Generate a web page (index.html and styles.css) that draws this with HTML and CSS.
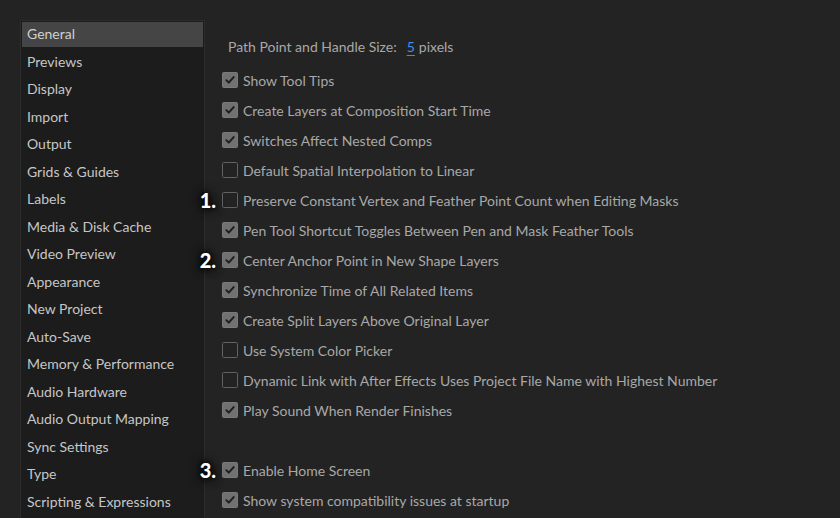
FILE: index.html
```html
<!DOCTYPE html>
<html>
<head>
<meta charset="utf-8">
<link rel="stylesheet" href="styles.css">
</head>
<body>
<div class="window">
  <nav class="sidebar">
    <div class="nav-item selected">General</div>
    <div class="nav-item">Previews</div>
    <div class="nav-item">Display</div>
    <div class="nav-item">Import</div>
    <div class="nav-item">Output</div>
    <div class="nav-item">Grids &amp; Guides</div>
    <div class="nav-item">Labels</div>
    <div class="nav-item">Media &amp; Disk Cache</div>
    <div class="nav-item">Video Preview</div>
    <div class="nav-item">Appearance</div>
    <div class="nav-item">New Project</div>
    <div class="nav-item">Auto-Save</div>
    <div class="nav-item">Memory &amp; Performance</div>
    <div class="nav-item">Audio Hardware</div>
    <div class="nav-item">Audio Output Mapping</div>
    <div class="nav-item">Sync Settings</div>
    <div class="nav-item">Type</div>
    <div class="nav-item">Scripting &amp; Expressions</div>
  </nav>
  <main class="panel">
    <div class="size-row">Path Point and Handle Size:<span class="value">5</span>pixels</div>
    <div class="options">
      <div class="opt"><span class="box on"><svg viewBox="0 0 16 16"><path d="M3.8 8.2 L6.6 11 L12.2 4.6"/></svg></span>Show Tool Tips</div>
      <div class="opt"><span class="box on"><svg viewBox="0 0 16 16"><path d="M3.8 8.2 L6.6 11 L12.2 4.6"/></svg></span>Create Layers at Composition Start Time</div>
      <div class="opt"><span class="box on"><svg viewBox="0 0 16 16"><path d="M3.8 8.2 L6.6 11 L12.2 4.6"/></svg></span>Switches Affect Nested Comps</div>
      <div class="opt"><span class="box"></span>Default Spatial Interpolation to Linear</div>
      <div class="opt"><span class="badge">1.</span><span class="box"></span>Preserve Constant Vertex and Feather Point Count when Editing Masks</div>
      <div class="opt"><span class="box on"><svg viewBox="0 0 16 16"><path d="M3.8 8.2 L6.6 11 L12.2 4.6"/></svg></span>Pen Tool Shortcut Toggles Between Pen and Mask Feather Tools</div>
      <div class="opt"><span class="badge">2.</span><span class="box on"><svg viewBox="0 0 16 16"><path d="M3.8 8.2 L6.6 11 L12.2 4.6"/></svg></span>Center Anchor Point in New Shape Layers</div>
      <div class="opt"><span class="box on"><svg viewBox="0 0 16 16"><path d="M3.8 8.2 L6.6 11 L12.2 4.6"/></svg></span>Synchronize Time of All Related Items</div>
      <div class="opt"><span class="box on"><svg viewBox="0 0 16 16"><path d="M3.8 8.2 L6.6 11 L12.2 4.6"/></svg></span>Create Split Layers Above Original Layer</div>
      <div class="opt"><span class="box"></span>Use System Color Picker</div>
      <div class="opt"><span class="box"></span>Dynamic Link with After Effects Uses Project File Name with Highest Number</div>
      <div class="opt"><span class="box on"><svg viewBox="0 0 16 16"><path d="M3.8 8.2 L6.6 11 L12.2 4.6"/></svg></span>Play Sound When Render Finishes</div>
      <div class="spacer"></div>
      <div class="opt"><span class="badge">3.</span><span class="box on"><svg viewBox="0 0 16 16"><path d="M3.8 8.2 L6.6 11 L12.2 4.6"/></svg></span>Enable Home Screen</div>
      <div class="opt"><span class="box on"><svg viewBox="0 0 16 16"><path d="M3.8 8.2 L6.6 11 L12.2 4.6"/></svg></span>Show system compatibility issues at startup</div>
    </div>
  </main>
</div>
</body>
</html>
```
FILE: styles.css
```css
html, body {
  margin: 0;
  padding: 0;
  background: #232323;
  height: 100%;
  overflow: hidden;
}
body {
  font-family: Lato, "Open Sans", sans-serif;
  font-size: 14px;
}
.window {
  display: flex;
  padding: 20px 0 0 20px;
  height: 100%;
  box-sizing: border-box;
}
.sidebar {
  width: 185px;
  box-sizing: border-box;
  background: #1c1c1c;
  border: 1px solid #2c2c2c;
  border-bottom: none;
  border-radius: 2px 2px 0 0;
  padding: 1px;
  display: flex;
  flex-direction: column;
  gap: 2.5px;
  flex-shrink: 0;
}
.nav-item {
  height: 25px;
  box-sizing: border-box;
  line-height: 24px;
  padding: 0 0 1px 5px;
  color: #c6c6c6;
  white-space: nowrap;
}
.nav-item.selected {
  background: #454545;
  color: #cfcfcf;
}
.panel {
  margin-left: 17px;
  padding-top: 12px;
  color: #a8a8a8;
}
.size-row {
  height: 30px;
  line-height: 30px;
  padding-left: 6px;
  display: flex;
}
.size-row .value {
  color: #3d8fe6;
  text-decoration: underline;
  text-underline-offset: 3px;
  margin: 0 4px 0 10px;
}
.options {
  margin-top: 3px;
  display: flex;
  flex-direction: column;
}
.opt {
  position: relative;
  height: 30px;
  display: flex;
  align-items: center;
  gap: 5px;
  white-space: nowrap;
}
.spacer {
  height: 30px;
}
.box {
  width: 16px;
  height: 16px;
  box-sizing: border-box;
  border: 1.5px solid #626262;
  border-radius: 1.5px;
  flex-shrink: 0;
  display: flex;
}
.box.on {
  background: #717171;
  border-color: #7a7a7a;
}
.box svg {
  width: 100%;
  height: 100%;
}
.box svg path {
  fill: none;
  stroke: #1d1d1d;
  stroke-width: 2.2;
  stroke-linecap: round;
  stroke-linejoin: round;
}
.badge {
  position: absolute;
  right: calc(100% + 6px);
  top: 50%;
  transform: translateY(-50%);
  font-family: Lato, sans-serif;
  font-weight: 900;
  font-size: 20px;
  color: #ffffff;
  text-shadow: 0 0 4px #000, 0 0 8px #000, 0 0 12px #000;
  line-height: 1;
}
```
